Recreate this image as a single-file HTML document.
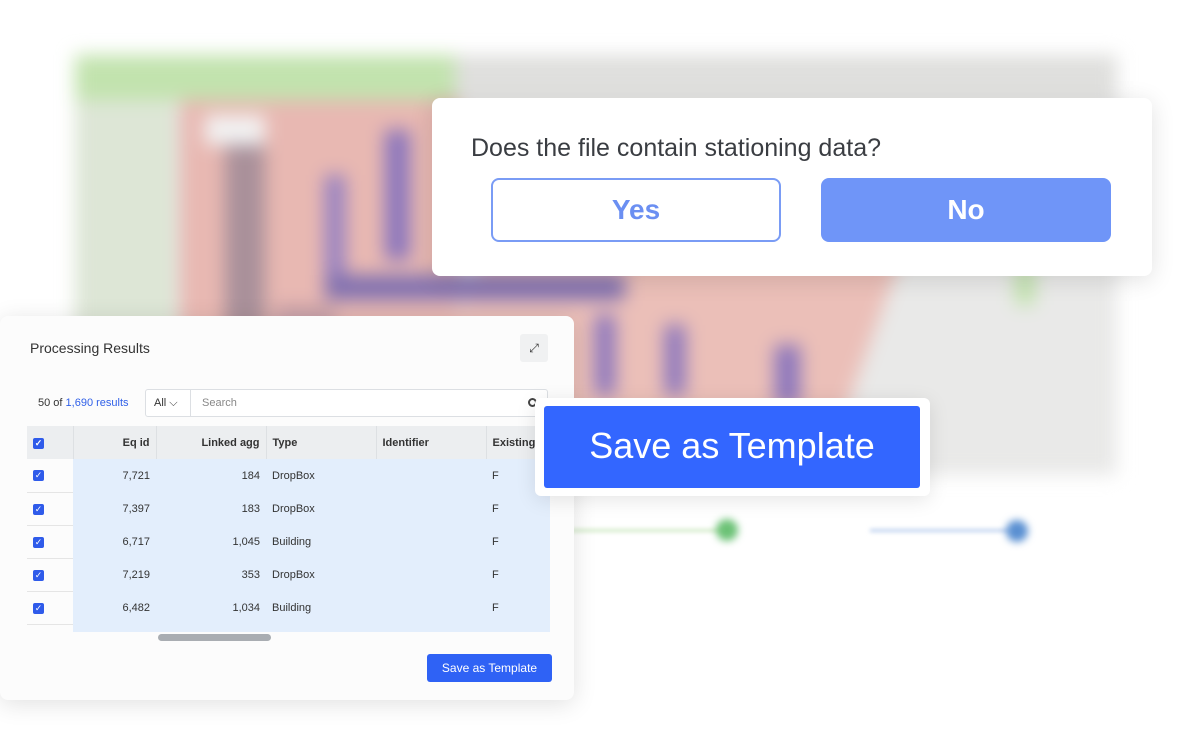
<!DOCTYPE html>
<html><head><meta charset="utf-8"><style>
*{box-sizing:border-box;margin:0;padding:0}
body{width:1200px;height:744px;overflow:hidden;background:#fff;font-family:"Liberation Sans",Arial,sans-serif;position:relative}
.abs{position:absolute}
.map{left:75px;top:55px;width:1042px;height:420px;background:#e9e9e8;filter:blur(9px);overflow:hidden}
.map div{position:absolute}
.card{background:#fff;border-radius:8px;box-shadow:0 4px 24px rgba(0,0,0,.12)}
table{border-collapse:collapse;font-size:11px;color:#333}
td,th{height:33px;padding:0 6px}
th{font-weight:bold;background:#eceef0;text-align:left;border-right:1px solid #dde0e3}
.r{text-align:right}
.cb{display:inline-block;width:11px;height:11px;background:#2f5bea;border-radius:2px;color:#fff;font-size:9px;line-height:11px;text-align:center}
.hl{background:#e3eefc}
</style></head><body>
<div class="abs map">
 <div style="left:0;top:0;width:1042px;height:40px;background:#dfdfdd"></div>
 <div style="left:0;top:0;width:380px;height:45px;background:#c2e3ae"></div>
 <div style="left:0;top:45px;width:100px;height:375px;background:#dde6d6"></div>
 <div style="left:105px;top:45px;width:280px;height:350px;background:#e8b8b2"></div>
 <div style="left:385px;top:110px;width:420px;height:300px;background:#ebbfb8;transform:skewX(-20deg)"></div>
 <div style="left:310px;top:75px;width:25px;height:130px;background:#8a75bd"></div>
 <div style="left:250px;top:120px;width:20px;height:120px;background:#9580c2"></div>
 <div style="left:150px;top:80px;width:40px;height:200px;background:#a9909a"></div>
 <div style="left:250px;top:220px;width:300px;height:25px;background:#8070b0"></div>
 <div style="left:520px;top:260px;width:20px;height:80px;background:#8a75bd"></div>
 <div style="left:590px;top:270px;width:20px;height:70px;background:#8a75bd"></div>
 <div style="left:700px;top:290px;width:25px;height:60px;background:#8a75bd"></div>
 <div style="left:940px;top:210px;width:20px;height:40px;background:#c2e3ae"></div>
 <div style="left:130px;top:60px;width:60px;height:30px;background:#f2f2f2"></div>
 <div style="left:200px;top:250px;width:60px;height:60px;background:#c7a0a8"></div>
</div>
<div class="abs" style="left:560px;top:529px;width:170px;height:3px;background:#cfe9c4;filter:blur(2px)"></div>
<div class="abs" style="left:716px;top:519px;width:22px;height:22px;border-radius:50%;background:#6cc276;filter:blur(4px)"></div>
<div class="abs" style="left:870px;top:529px;width:140px;height:3px;background:#bcd0ee;filter:blur(2px)"></div>
<div class="abs" style="left:1006px;top:520px;width:22px;height:22px;border-radius:50%;background:#5a90d2;filter:blur(4px)"></div>

<div class="abs card" style="left:432px;top:98px;width:720px;height:178px">
 <div class="abs" style="left:39px;top:36px;font-size:25px;color:#3a3d42">Does the file contain stationing data?</div>
 <div class="abs" style="left:59px;top:80px;width:290px;height:64px;border:2px solid #7a9cf5;border-radius:8px;color:#6b8ff2;font-size:28px;font-weight:bold;text-align:center;line-height:60px">Yes</div>
 <div class="abs" style="left:389px;top:80px;width:290px;height:64px;background:#6f95f8;border-radius:8px;color:#fff;font-size:28px;font-weight:bold;text-align:center;line-height:64px">No</div>
</div>

<div class="abs card" style="left:0;top:316px;width:574px;height:384px;background:#fcfcfc">
 <div class="abs" style="left:30px;top:24px;font-size:14px;color:#333">Processing Results</div>
 <div class="abs" style="left:520px;top:18px;width:28px;height:28px;background:#f0f1f2;border-radius:3px;text-align:center;line-height:28px;font-size:12px;color:#333">⤢</div>
 <div class="abs" style="left:38px;top:81px;font-size:11px;color:#333">50 of <span style="color:#3060e8">1,690 results</span></div>
 <div class="abs" style="left:145px;top:73px;width:403px;height:28px;border:1px solid #dcdfe3;border-radius:3px;background:#fff;font-size:11px">
  <div class="abs" style="left:0;top:0;width:45px;height:26px;border-right:1px solid #dcdfe3;line-height:26px;padding-left:8px;color:#333">All ⌵</div>
  <div class="abs" style="left:56px;top:0;line-height:26px;color:#888">Search</div>
  <div class="abs" style="right:10px;top:8px;width:9px;height:9px;border:2px solid #444;border-radius:50%"></div>
 </div>
 <div class="abs" style="left:27px;top:110px;width:523px;height:206px;overflow:hidden">
 <table style="width:560px">
  <tr><th style="width:46px"><span class="cb">✓</span></th><th class="r" style="width:83px">Eq id</th><th class="r" style="width:110px">Linked agg</th><th style="width:110px">Type</th><th style="width:110px">Identifier</th><th>Existing</th></tr>
  <tr><td style="border-bottom:1px solid #e5e5e5"><span class="cb">✓</span></td><td class="r hl">7,721</td><td class="r hl">184</td><td class="hl">DropBox</td><td class="hl"></td><td class="hl">F</td></tr>
  <tr><td style="border-bottom:1px solid #e5e5e5"><span class="cb">✓</span></td><td class="r hl">7,397</td><td class="r hl">183</td><td class="hl">DropBox</td><td class="hl"></td><td class="hl">F</td></tr>
  <tr><td style="border-bottom:1px solid #e5e5e5"><span class="cb">✓</span></td><td class="r hl">6,717</td><td class="r hl">1,045</td><td class="hl">Building</td><td class="hl"></td><td class="hl">F</td></tr>
  <tr><td style="border-bottom:1px solid #e5e5e5"><span class="cb">✓</span></td><td class="r hl">7,219</td><td class="r hl">353</td><td class="hl">DropBox</td><td class="hl"></td><td class="hl">F</td></tr>
  <tr><td style="border-bottom:1px solid #e5e5e5"><span class="cb">✓</span></td><td class="r hl">6,482</td><td class="r hl">1,034</td><td class="hl">Building</td><td class="hl"></td><td class="hl">F</td></tr>
  <tr><td></td><td class="hl"></td><td class="hl"></td><td class="hl"></td><td class="hl"></td><td class="hl"></td></tr>
 </table>
 </div>
 <div class="abs" style="left:158px;top:318px;width:113px;height:7px;border-radius:4px;background:#a9adb2"></div>
 <div class="abs" style="left:427px;top:338px;width:125px;height:28px;background:#2f62f5;border-radius:3px;color:#fff;font-size:12px;text-align:center;line-height:28px">Save as Template</div>
</div>

<div class="abs" style="left:535px;top:398px;width:395px;height:98px;background:#fff;border-radius:6px;box-shadow:0 4px 20px rgba(0,0,0,.1)">
 <div class="abs" style="left:9px;top:8px;width:376px;height:82px;background:#3366ff;border-radius:3px;color:#fff;font-size:36px;text-align:center;line-height:80px">Save as Template</div>
</div>
</body></html>
